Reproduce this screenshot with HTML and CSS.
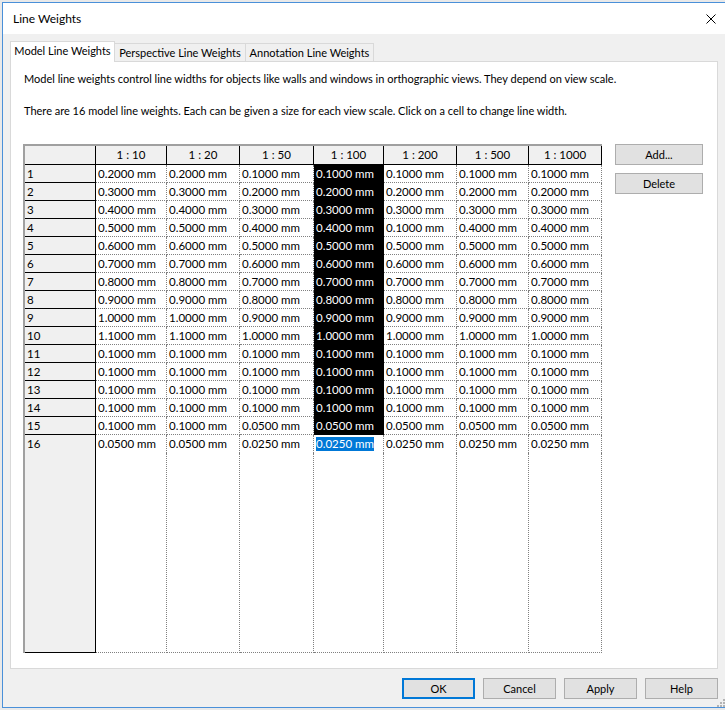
FILE: index.html
```html
<!DOCTYPE html>
<html>
<head>
<meta charset="utf-8">
<title>Line Weights</title>
<link rel="stylesheet" href="styles.css">
</head>
<body>
<div class="window">
  <div class="titlebar">
    <span class="title">Line Weights</span>
    <svg class="close" width="10" height="10" viewBox="0 0 10 10"><path d="M0.5 0.5 L9.5 9.5 M9.5 0.5 L0.5 9.5" stroke="#000" stroke-width="1" fill="none"/></svg>
  </div>
  <div class="client">
    <div class="tabs">
      <div class="tab active t1">Model Line Weights</div>
      <div class="tab t2">Perspective Line Weights</div>
      <div class="tab t3">Annotation Line Weights</div>
    </div>
    <div class="panel">
      <p class="desc first">Model line weights control line widths for objects like walls and windows in orthographic views. They depend on view scale.</p>
      <p class="desc second">There are 16 model line weights. Each can be given a size for each view scale. Click on a cell to change line width.</p>
      <div class="content">
        <div class="grid-frame">
          <table class="grid">
            <colgroup>
              <col class="c0"><col class="c1"><col class="c2"><col class="c3"><col class="c4"><col class="c5"><col class="c6"><col class="c7">
            </colgroup>
            <thead>
              <tr><th class="corner"></th><th>1 : 10</th><th>1 : 20</th><th>1 : 50</th><th>1 : 100</th><th>1 : 200</th><th>1 : 500</th><th>1 : 1000</th></tr>
            </thead>
            <tbody>
              <tr><th>1</th><td>0.2000 mm</td><td>0.2000 mm</td><td>0.1000 mm</td><td class="sel">0.1000 mm</td><td>0.1000 mm</td><td>0.1000 mm</td><td>0.1000 mm</td></tr>
              <tr><th>2</th><td>0.3000 mm</td><td>0.3000 mm</td><td>0.2000 mm</td><td class="sel">0.2000 mm</td><td>0.2000 mm</td><td>0.2000 mm</td><td>0.2000 mm</td></tr>
              <tr><th>3</th><td>0.4000 mm</td><td>0.4000 mm</td><td>0.3000 mm</td><td class="sel">0.3000 mm</td><td>0.3000 mm</td><td>0.3000 mm</td><td>0.3000 mm</td></tr>
              <tr><th>4</th><td>0.5000 mm</td><td>0.5000 mm</td><td>0.4000 mm</td><td class="sel">0.4000 mm</td><td>0.1000 mm</td><td>0.4000 mm</td><td>0.4000 mm</td></tr>
              <tr><th>5</th><td>0.6000 mm</td><td>0.6000 mm</td><td>0.5000 mm</td><td class="sel">0.5000 mm</td><td>0.5000 mm</td><td>0.5000 mm</td><td>0.5000 mm</td></tr>
              <tr><th>6</th><td>0.7000 mm</td><td>0.7000 mm</td><td>0.6000 mm</td><td class="sel">0.6000 mm</td><td>0.6000 mm</td><td>0.6000 mm</td><td>0.6000 mm</td></tr>
              <tr><th>7</th><td>0.8000 mm</td><td>0.8000 mm</td><td>0.7000 mm</td><td class="sel">0.7000 mm</td><td>0.7000 mm</td><td>0.7000 mm</td><td>0.7000 mm</td></tr>
              <tr><th>8</th><td>0.9000 mm</td><td>0.9000 mm</td><td>0.8000 mm</td><td class="sel">0.8000 mm</td><td>0.8000 mm</td><td>0.8000 mm</td><td>0.8000 mm</td></tr>
              <tr><th>9</th><td>1.0000 mm</td><td>1.0000 mm</td><td>0.9000 mm</td><td class="sel">0.9000 mm</td><td>0.9000 mm</td><td>0.9000 mm</td><td>0.9000 mm</td></tr>
              <tr><th>10</th><td>1.1000 mm</td><td>1.1000 mm</td><td>1.0000 mm</td><td class="sel">1.0000 mm</td><td>1.0000 mm</td><td>1.0000 mm</td><td>1.0000 mm</td></tr>
              <tr><th>11</th><td>0.1000 mm</td><td>0.1000 mm</td><td>0.1000 mm</td><td class="sel">0.1000 mm</td><td>0.1000 mm</td><td>0.1000 mm</td><td>0.1000 mm</td></tr>
              <tr><th>12</th><td>0.1000 mm</td><td>0.1000 mm</td><td>0.1000 mm</td><td class="sel">0.1000 mm</td><td>0.1000 mm</td><td>0.1000 mm</td><td>0.1000 mm</td></tr>
              <tr><th>13</th><td>0.1000 mm</td><td>0.1000 mm</td><td>0.1000 mm</td><td class="sel">0.1000 mm</td><td>0.1000 mm</td><td>0.1000 mm</td><td>0.1000 mm</td></tr>
              <tr><th>14</th><td>0.1000 mm</td><td>0.1000 mm</td><td>0.1000 mm</td><td class="sel">0.1000 mm</td><td>0.1000 mm</td><td>0.1000 mm</td><td>0.1000 mm</td></tr>
              <tr><th>15</th><td>0.1000 mm</td><td>0.1000 mm</td><td>0.0500 mm</td><td class="sel">0.0500 mm</td><td>0.0500 mm</td><td>0.0500 mm</td><td>0.0500 mm</td></tr>
              <tr class="last"><th>16</th><td>0.0500 mm</td><td>0.0500 mm</td><td>0.0250 mm</td><td><span class="edit">0.0250 mm</span></td><td>0.0250 mm</td><td>0.0250 mm</td><td>0.0250 mm</td></tr>
              <tr class="filler"><th><div class="fill"></div></th><td><div class="fill"></div></td><td><div class="fill"></div></td><td><div class="fill"></div></td><td><div class="fill"></div></td><td><div class="fill"></div></td><td><div class="fill"></div></td><td><div class="fill"></div></td></tr>
            </tbody>
          </table>
        </div>
        <div class="side-buttons">
          <button class="btn side">Add...</button>
          <button class="btn side delete">Delete</button>
        </div>
      </div>
    </div>
    <div class="footer">
      <button class="btn foot default">OK</button>
      <button class="btn foot">Cancel</button>
      <button class="btn foot">Apply</button>
      <button class="btn foot">Help</button>
    </div>
    <svg class="grip" width="9" height="9" viewBox="0 0 9 9">
      <g fill="#b4b4b4">
        <rect x="7" y="1" width="2" height="2"/>
        <rect x="4" y="4" width="2" height="2"/><rect x="7" y="4" width="2" height="2"/>
        <rect x="1" y="7" width="2" height="2"/><rect x="4" y="7" width="2" height="2"/><rect x="7" y="7" width="2" height="2"/>
      </g>
    </svg>
  </div>
</div>
</body>
</html>
```
FILE: styles.css
```css
* { box-sizing: border-box; }
html, body { margin: 0; padding: 0; }
body {
  background: #e9e9e9;
  overflow: hidden;
  font-family: Lato, "Noto Sans", sans-serif;
  font-size: 11px;
  color: #000;
}
.window {
  position: relative;
  margin: 2px 0 0 2px;
  width: 724px;
  height: 706px;
  border: 1px solid #4a90d9;
  background: #f0f0f0;
}
.titlebar {
  height: 31px;
  background: #fff;
  display: flex;
  align-items: center;
  padding: 0 9px 0 10px;
}
.title { flex: 1; font-size: 12px; }
.close { display: block; }
.client {
  position: relative;
  height: 673px;
  padding: 7px 7px 0 7px;
}
.tabs {
  display: flex;
  align-items: flex-end;
  height: 21px;
  margin-bottom: -1px;
  position: relative;
  z-index: 1;
}
.tab {
  height: 19px;
  border: 1px solid #d9d9d9;
  background: #f0f0f0;
  display: flex;
  align-items: center;
  justify-content: center;
  white-space: nowrap;
  line-height: 16px;
}
.tab.active {
  height: 21px;
  background: #fff;
  border-bottom: none;
  padding-bottom: 2px;
}
.t1 { width: 105px; }
.t2 { width: 132px; margin-left: -1px; }
.t3 { width: 129px; margin-left: -1px; }
.panel {
  height: 608px;
  background: #fff;
  border: 1px solid #d9d9d9;
  padding: 9px 12px 0 12px;
}
.desc {
  margin: 0 0 0 1px;
  line-height: 16px;
  white-space: nowrap;
}
.desc.second { margin-top: 16px; }
.content {
  display: flex;
  align-items: flex-start;
  gap: 13px;
  margin-top: 25px;
}
.grid-frame {
  width: 579px;
  height: 509px;
  border-top: 2px solid #a0a0a0;
  border-left: 2px solid #a0a0a0;
  background: #fff;
  overflow: hidden;
}
.grid {
  width: 577px;
  table-layout: fixed;
  border-collapse: separate;
  border-spacing: 0;
  font-size: 11.5px;
}
.c0 { width: 71px; }
.c1 { width: 71px; }
.c2 { width: 73px; }
.c3 { width: 74px; }
.c4 { width: 70px; }
.c5 { width: 73px; }
.c6 { width: 72px; }
.c7 { width: 73px; }
.grid th, .grid td {
  padding: 0 0 0 2px;
  font-weight: 400;
  white-space: nowrap;
  overflow: hidden;
  vertical-align: top;
}
.grid thead th {
  background: #f0f0f0;
  border-right: 1px solid #000;
  border-bottom: 1px solid #000;
  line-height: 18px;
  text-align: center;
  padding: 0;
  font-weight: 400;
}
.grid tbody th {
  background: #f0f0f0;
  border-right: 1px solid #000;
  border-bottom: 1px solid #000;
  text-align: left;
  line-height: 17px;
}
.grid tbody td {
  border-right: 1px dotted #808080;
  border-bottom: 1px dotted #808080;
  line-height: 17px;
}
.grid td.sel {
  background: #000;
  color: #fff;
  border-color: #000;
}
.grid tr.last th, .grid tr.last td {
  border-bottom: none;
  line-height: 18px;
}
.edit {
  display: inline-block;
  background: #0078d7;
  color: #fff;
  line-height: 14px;
  margin-top: 1px;
}
.grid tr.filler th, .grid tr.filler td { padding: 0; line-height: 0; }
.fill { height: 199px; }
.side-buttons {
  display: flex;
  flex-direction: column;
  gap: 8px;
}
.btn {
  margin: 0;
  padding: 0;
  font-family: inherit;
  font-size: 11px;
  color: #000;
  background: #e1e1e1;
  border: 1px solid #adadad;
  height: 21px;
  line-height: 18px;
}
.btn.side { width: 88px; }
.footer {
  display: flex;
  justify-content: flex-end;
  gap: 8px;
  margin-top: 9px;
}
.btn.foot { width: 73px; }
.btn.default {
  border: 1px solid #0078d7;
  box-shadow: inset 0 0 0 1px #0078d7;
}
.grip {
  position: absolute;
  right: 0;
  bottom: 0;
  display: block;
}
```
